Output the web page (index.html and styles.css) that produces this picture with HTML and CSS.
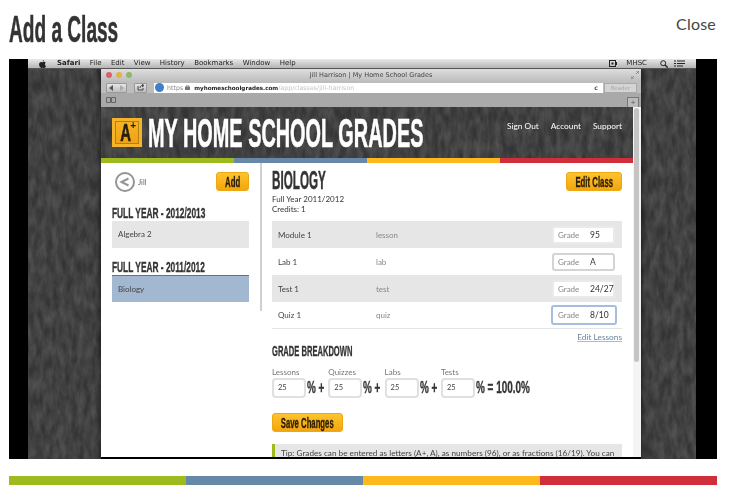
FILE: index.html
```html
<!DOCTYPE html>
<html lang="en">
<head>
<meta charset="utf-8">
<title>Add a Class</title>
<link rel="stylesheet" href="styles.css">
</head>
<body>
<header class="top">
  <h1 class="page-title">Add a Class</h1>
  <a class="close">Close</a>
</header>
<section class="shot">
  <div class="desktop">
    <svg class="chalk" width="100%" height="100%"><defs><filter id="n"><feTurbulence type="fractalNoise" baseFrequency="0.16 0.06" numOctaves="4" seed="5"/><feColorMatrix values="0 0 0 0 1 0 0 0 0 1 0 0 0 0 1 0.24 0 0 0 -0.055"/></filter></defs><rect width="100%" height="100%" filter="url(#n)"/></svg>
    <div class="menubar">
      <svg class="apple" width="7" height="8" viewBox="0 0 14 16"><path d="M10 0c0 2-1.500 3.500-3 3.500C7 2 8.500.5 10 0zM7 4.500c1 0 2-.8 3.300-.8 1.300 0 2.500.7 3.200 1.800-2.700 1.600-2.200 5.200.5 6.300-.8 2-2.200 4.200-3.700 4.200-1.100 0-1.500-.7-2.800-.7s-1.800.7-2.800.7C2.500 16 0 12 0 8.700 0 5.500 2 3.800 4 3.800c1.200 0 2.200.7 3 .7z"/></svg>
      <ul class="menu">
        <li class="strong">Safari</li><li>File</li><li>Edit</li><li>View</li><li>History</li><li>Bookmarks</li><li>Window</li><li>Help</li>
      </ul>
      <div class="status">
        <svg class="cam" width="9" height="7" viewBox="0 0 9 7"><rect x=".5" y=".5" width="6" height="6" fill="none" stroke="#222"/><rect x="2.500" y="2.500" width="2" height="2" fill="#222"/><path d="M7.500 2v3" stroke="#222"/></svg>
        <span class="mhsc">MHSC</span>
        <svg class="glass" width="8" height="8" viewBox="0 0 8 8"><circle cx="3.200" cy="3.200" r="2.500" fill="none" stroke="#222"/><path d="M5 5l2.700 2.700" stroke="#222" stroke-width="1.300"/></svg>
        <svg width="11" height="7" viewBox="0 0 11 7"><path d="M0 1h2M3 1h8M0 3.500h2M3 3.500h8M0 6h2M3 6h6" stroke="#222" stroke-width="1.100"/></svg>
      </div>
    </div>
    <div class="browser">
      <div class="titlebar">
        <div class="lights"><i class="l-red"></i><i class="l-amber"></i><i class="l-green"></i></div>
        <span class="win-title">Jill Harrison | My Home School Grades</span>
        <svg class="expand" width="8" height="8" viewBox="0 0 8 8"><path d="M0 8l3-3M8 0L5 3M5 0h3v3M0 5v3h3" fill="none" stroke="#888"/></svg>
      </div>
      <div class="toolbar">
        <div class="tb-btn tb-nav"><svg width="15" height="6" viewBox="0 0 15 6"><path d="M4 0v6L0 3z" fill="#555"/><path d="M11 0v6l4-3z" fill="#aaa"/></svg></div>
        <div class="tb-btn tb-share"><svg width="8" height="7" viewBox="0 0 8 7"><path d="M1 2v4h5V4M3 4c0-2 1-2.500 3-2.500M5 0l2 1.500L5 3" fill="none" stroke="#444"/></svg></div>
        <div class="address">
          <i class="globe"></i>
          <span class="proto">https</span>
          <svg class="lock" width="5" height="5" viewBox="0 0 5 5"><rect y="2" width="5" height="3" fill="#777"/><path d="M1 2V1h3v1" fill="none" stroke="#777"/></svg>
          <span class="host">myhomeschoolgrades.com</span><span class="path">/app/classes/jill-harrison</span>
          <span class="reload">c</span>
        </div>
        <div class="reader">Reader</div>
      </div>
      <div class="bookbar">
        <svg width="10" height="6" viewBox="0 0 10 6"><path d="M.5.5h4v5h-4zM5.500.5h4v5h-4z" fill="none" stroke="#666"/></svg>
        <span class="newtab">+</span>
      </div>
      <div class="viewport">
        <div class="page">
          <div class="site-head">
            <svg class="chalk" width="100%" height="100%"><rect width="100%" height="100%" filter="url(#n)"/></svg>
            <div class="logo"><span class="squeeze sq-logo">A</span><sup>+</sup></div>
            <div class="site-name"><span class="squeeze sq-site">MY HOME SCHOOL GRADES</span></div>
            <nav class="site-nav"><a>Sign Out</a><a>Account</a><a>Support</a></nav>
          </div>
          <div class="stripes small"><i class="green"></i><i class="blue"></i><i class="yellow"></i><i class="red"></i></div>
          <div class="app">
            <aside class="side">
              <div class="side-top">
                <div class="back"><svg width="20" height="20" viewBox="0 0 20 20"><circle cx="10" cy="10" r="9" fill="#fff" stroke="#949494" stroke-width="2"/><path d="M13.500 6.500L6.500 10l7 3.500" fill="none" stroke="#949494" stroke-width="2"/></svg><span>Jill</span></div>
                <a class="btn btn-add"><span class="squeeze sq-btn">Add</span></a>
              </div>
              <h3 class="year first"><span class="squeeze sq-year">FULL YEAR - 2012/2013</span></h3>
              <div class="side-row">Algebra 2</div>
              <h3 class="year"><span class="squeeze sq-year">FULL YEAR - 2011/2012</span></h3>
              <div class="side-row active">Biology</div>
            </aside>
            <div class="divider"></div>
            <main class="main">
              <div class="class-head">
                <div>
                  <h2 class="class-name"><span class="squeeze sq-class">BIOLOGY</span></h2>
                  <p class="meta">Full Year 2011/2012<br>Credits: 1</p>
                </div>
                <a class="btn btn-edit"><span class="squeeze sq-btn">Edit Class</span></a>
              </div>
              <div class="lessons">
                <div class="row shade"><span class="l-name">Module 1</span><span class="l-type">lesson</span><div class="grade"><span>Grade</span><b>95</b></div></div>
                <div class="row"><span class="l-name">Lab 1</span><span class="l-type">lab</span><div class="grade edged"><span>Grade</span><b>A</b></div></div>
                <div class="row shade"><span class="l-name">Test 1</span><span class="l-type">test</span><div class="grade"><span>Grade</span><b>24/27</b></div></div>
                <div class="row last"><span class="l-name">Quiz 1</span><span class="l-type">quiz</span><div class="grade focus"><span>Grade</span><b>8/10</b></div></div>
              </div>
              <div class="edit-link"><a>Edit Lessons</a></div>
              <h3 class="breakdown"><span class="squeeze sq-break">GRADE BREAKDOWN</span></h3>
              <div class="weights">
                <div class="weight"><label>Lessons</label><div class="w-line"><div class="w-input">25</div><span class="squeeze sq-pct">% +</span></div></div>
                <div class="weight"><label>Quizzes</label><div class="w-line"><div class="w-input">25</div><span class="squeeze sq-pct">% +</span></div></div>
                <div class="weight"><label>Labs</label><div class="w-line"><div class="w-input">25</div><span class="squeeze sq-pct">% +</span></div></div>
                <div class="weight"><label>Tests</label><div class="w-line"><div class="w-input">25</div><span class="squeeze sq-pct">% = 100.0%</span></div></div>
              </div>
              <a class="btn btn-save"><span class="squeeze sq-save">Save Changes</span></a>
              <div class="tip">Tip: Grades can be entered as letters (A+, A), as numbers (96), or as fractions (16/19). You can</div>
            </main>
          </div>
        </div>
        <div class="scrollbar"><i></i></div>
      </div>
    </div>
  </div>
</section>
<div class="stripes big"><i class="green"></i><i class="blue"></i><i class="yellow"></i><i class="red"></i></div>
</body>
</html>
```
FILE: styles.css
```css
* { box-sizing: border-box; }
html, body { margin: 0; padding: 0; height: 100%; overflow: hidden; background: #fff; }
body { font-family: Lato, "Liberation Sans", sans-serif; color: #333; }
h1, h2, h3, p, ul { margin: 0; padding: 0; }
i { display: block; font-style: normal; }

.squeeze {
  display: inline-block;
  font-family: "Liberation Sans", sans-serif;
  font-weight: 700;
  white-space: nowrap;
  transform-origin: left center;
  -webkit-text-stroke: .35px currentColor;
}

.top { display: flex; justify-content: space-between; height: 59px; padding: 0 13px 0 9px; }
.page-title {
  font-family: "Liberation Sans", sans-serif;
  font-size: 36px; line-height: 36px; font-weight: 700; color: #333;
  margin-top: 12px; height: 36px;
  transform: scaleX(.53); transform-origin: left center; white-space: nowrap;
  -webkit-text-stroke: .5px #333;
}
.close { font-size: 16px; line-height: 18px; margin-top: 15px; color: #444; letter-spacing: .2px; }

.shot { margin-left: 9px; width: 708px; height: 400px; background: #000; padding: 0 21px 0 19px; }
.desktop { position: relative; height: 400px; background: #343434; overflow: hidden; display: flex; flex-direction: column; filter: blur(.35px); }
.chalk { position: absolute; inset: 0; pointer-events: none; }

.menubar {
  position: relative; z-index: 1; height: 10px; flex: none;
  background: linear-gradient(#e8e8e8, #b5b5b5);
  border-bottom: 1px solid #555;
  display: flex; align-items: center; padding: 0 11px 0 11px;
  font: 7px/9px "DejaVu Sans", sans-serif; color: #222;
}
.apple { margin-right: 11px; fill: #222; }
.menu { display: flex; list-style: none; gap: 9.400px; }
.strong { font-weight: 700; }
.status { margin-left: auto; display: flex; align-items: center; }
.cam { margin-right: 8px; }
.mhsc { font-size: 7px; margin-right: 13px; }
.glass { margin-right: 6px; }

.browser {
  position: relative; width: 540px; height: 390px; margin-left: 73px; flex: none;
  display: flex; flex-direction: column; overflow: hidden;
  border-bottom: 2px solid #000;
  box-shadow: 0 0 6px #111;
}
.titlebar {
  position: relative; height: 13px; flex: none; background: linear-gradient(#dedede, #bcbcbc);
  font: 6.500px/13px "DejaVu Sans", sans-serif; color: #444; text-align: center;
}
.lights { position: absolute; left: 5px; top: 3px; display: flex; gap: 4px; }
.lights i { width: 6px; height: 6px; border-radius: 50%; }
.l-red { background: #d8626a; }
.l-amber { background: #e2b24a; }
.l-green { background: #8cb867; }
.win-title { display: block; }
.expand { position: absolute; right: 2px; top: 2px; }

.toolbar {
  height: 11px; flex: none; background: #bdbdbd;
  display: flex; align-items: center; padding: 0 4px 0 5px;
}
.tb-btn {
  height: 10px; border: 1px solid #999; border-radius: 1px; background: linear-gradient(#e6e6e6, #bdbdbd);
  display: flex; align-items: center; justify-content: center;
}
.tb-nav { width: 21px; margin-right: 7px; }
.tb-share { width: 13px; margin-right: 7px; }
.address {
  flex: 1; height: 10px; background: #fff; display: flex; align-items: center;
  font: 6.300px/10px "DejaVu Sans", sans-serif; color: #222; padding-left: 1px; white-space: nowrap; overflow: hidden;
}
.globe { width: 9px; height: 9px; border-radius: 50%; background: #3f7fc8; margin-right: 3px; flex: none; }
.proto { color: #8a8a8a; margin-right: 2px; }
.lock { margin-right: 4px; }
.host { font-weight: 700; font-size: 5.600px; }
.path { color: #c4c4c4; font-size: 6.300px; }
.reload { margin-left: auto; margin-right: 5px; color: #555; font-weight: 700; }
.reader {
  width: 33px; height: 10px; flex: none; margin-left: 1px; border: 1px solid #aaa; background: #d4d4d4;
  font: 5.500px/8px "DejaVu Sans", sans-serif; color: #aaa; text-align: center;
}

.bookbar {
  height: 14px; flex: none; background: #a9a9a9; display: flex; align-items: center;
  justify-content: space-between; padding: 0 2px 0 5px;
}
.newtab {
  align-self: flex-end; width: 12px; height: 10px; border: 1px solid #777; border-bottom: 0; background: #bbb;
  font: 8px/9px "Liberation Sans", sans-serif; color: #555; text-align: center;
}

.viewport { flex: 1; display: flex; min-height: 0; background: #fff; }
.page { width: 532px; flex: none; overflow: hidden; }
.scrollbar { width: 8px; flex: none; background: #f4f4f4; padding: 1px 1px; }
.scrollbar i { width: 5px; height: 254px; margin-left: 0; background: #c4c4c4; border-radius: 3px; }

.site-head {
  position: relative; height: 51px; background: #343434;
  display: flex; align-items: flex-start; padding: 11px 11px 0 11px;
}
.logo {
  position: relative; width: 30px; height: 29px; background: linear-gradient(#f6b726, #ee9f12);
  box-shadow: inset 0 0 0 3px #f5b32a, inset 0 0 0 4px #b57f14;
  color: #262010;
  display: flex; justify-content: center; line-height: 29px; font-size: 24px;
}
.sq-logo { transform: scaleX(.62); transform-origin: center; margin: 0 -4px 0 -1px; -webkit-text-stroke: .6px #262010; }
.logo sup { font: 700 10px/10px "Liberation Sans", sans-serif; margin-top: 3px; }
.site-name {
  position: relative; margin-left: 6px; width: 276px; height: 30px;
  color: #fff; font-size: 40px; line-height: 28px;
}
.sq-site { transform: scaleX(.497); -webkit-text-stroke: .6px #fff; }
.site-nav { position: relative; margin-left: auto; display: flex; gap: 12px; font-size: 8.300px; line-height: 16px; color: #fff; padding-top: 0; }

.stripes { display: flex; }
.stripes i { flex: 1; }
.small { height: 5px; }
.big { margin: 17px 0 0 9px; width: 708px; height: 9px; }
.green { background: #9dbb1f; }
.blue { background: #6589a6; }
.yellow { background: #fdb91e; }
.red { background: #cf2e3a; }

.app { display: flex; padding: 9px 11px 0 11px; font-size: 8px; color: #444; }
.side { width: 137px; flex: none; }
.side-top { display: flex; justify-content: space-between; height: 20px; padding-left: 3px; }
.back { display: flex; align-items: center; gap: 3px; font-size: 7.500px; color: #666; }
.btn {
  display: flex; justify-content: center; height: 19px; border-radius: 3px;
  background: linear-gradient(#fdc42e, #f3a50e); border: 1px solid #eea812; color: #2a1d05;
  font-size: 15px; line-height: 17px;
}
.sq-btn { transform: scaleX(.52); transform-origin: center; flex: none; }
.btn-add { width: 33px; }
.btn-edit { width: 56px; }
.year { height: 14px; font-size: 15px; line-height: 10px; color: #333; margin-top: 13px; }
.year.first { margin-top: 14px; height: 15px; line-height: 13px; }
.sq-year { transform: scaleX(.556); }
.side-row { height: 27px; background: #e6e6e6; padding-left: 6px; line-height: 27px; color: #444; }
.side-row.active { background: #a2b8d0; border-top: 1px solid #5f7386; line-height: 26px; }

.divider { width: 2px; height: 148px; margin: -9px 10px 0 11px; background: #d0d0d0; flex: none; }

.main { width: 350px; flex: none; }
.class-head { display: flex; justify-content: space-between; height: 49px; }
.class-name { font-size: 25px; line-height: 14px; height: 20px; color: #333; }
.sq-class { transform: scaleX(.467); -webkit-text-stroke: .5px #333; }
.meta { margin-top: 2px; font-size: 8px; line-height: 10px; color: #333; }

.row { display: flex; align-items: center; height: 27px; padding-left: 6px; color: #444; }
.row.shade { background: #e6e6e6; }
.row.last { border-bottom: 1px solid #e4e4e4; }
.l-name { width: 98px; flex: none; }
.l-type { width: 176px; flex: none; color: #888; }
.grade {
  width: 63px; height: 18px; background: #fff; border-radius: 3px; border: 2px solid #eaeaea;
  display: flex; align-items: center; font-size: 8px; padding-left: 4px;
}
.grade span { color: #888; width: 32px; flex: none; }
.grade b { font-weight: 400; color: #333; font-size: 8.500px; }
.edged { border-color: #d4d4d4; }
.focus { border-color: #a5bedd; margin-left: -1px; width: 66px; height: 20px; padding-left: 5px; }

.edit-link { text-align: right; font-size: 8.300px; line-height: 10px; margin-top: 3px; color: #6b84a0; }
.edit-link a { text-decoration: underline; text-decoration-color: #a9bbcf; }
.breakdown { height: 14px; font-size: 15px; line-height: 10px; margin-top: 3px; color: #333; }
.sq-break { transform: scaleX(.505); }
.weights { display: flex; margin-top: 9px; }
.weight { width: 56.300px; flex: none; }
.weight label { display: block; font-size: 8px; line-height: 9px; color: #777; height: 10px; }
.w-line { display: flex; align-items: center; }
.w-input {
  width: 34px; height: 20px; background: #fff; border: 2px solid #e0e0e0; border-radius: 4px; flex: none;
  font-size: 7.500px; line-height: 16px; padding-left: 4px; color: #444;
}
.sq-pct { font-size: 16px; line-height: 20px; color: #333; margin-left: 1px; transform: scaleX(.62); }
.btn-save { width: 71px; margin-top: 15px; }
.sq-save { flex: none; font-size: 15px; transform: scaleX(.515); transform-origin: center; }
.tip {
  margin-top: 12px; height: 26px; background: #e6e6e6; border-left: 3px solid #9dbb1f;
  padding: 4px 0 0 6px; font-size: 8.200px; line-height: 11px; color: #444; white-space: nowrap; overflow: hidden;
}
```
